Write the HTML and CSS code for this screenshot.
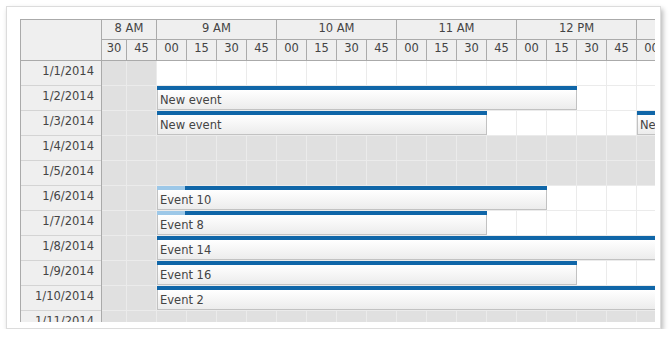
FILE: index.html
```html
<!DOCTYPE html>
<html>
<head>
<meta charset="utf-8">
<link rel="stylesheet" href="styles.css">
</head>
<body>
<div class="frame">
  <div class="scheduler">
    <div class="corner"></div>
    <div class="timeheader">
      <div class="hrow">
        <div class="hcell first">8 AM</div>
        <div class="hcell">9 AM</div>
        <div class="hcell">10 AM</div>
        <div class="hcell">11 AM</div>
        <div class="hcell">12 PM</div>
        <div class="hcell">1 PM</div>
      </div>
      <div class="mrow">
        <div class="mcell first">30</div><div class="mcell">45</div>
        <div class="mcell">00</div><div class="mcell">15</div><div class="mcell">30</div><div class="mcell">45</div>
        <div class="mcell">00</div><div class="mcell">15</div><div class="mcell">30</div><div class="mcell">45</div>
        <div class="mcell">00</div><div class="mcell">15</div><div class="mcell">30</div><div class="mcell">45</div>
        <div class="mcell">00</div><div class="mcell">15</div><div class="mcell">30</div><div class="mcell">45</div>
        <div class="mcell">00</div>
      </div>
    </div>
    <div class="rowheaders">
      <div class="rh">1/1/2014</div>
      <div class="rh">1/2/2014</div>
      <div class="rh">1/3/2014</div>
      <div class="rh">1/4/2014</div>
      <div class="rh">1/5/2014</div>
      <div class="rh">1/6/2014</div>
      <div class="rh">1/7/2014</div>
      <div class="rh">1/8/2014</div>
      <div class="rh">1/9/2014</div>
      <div class="rh">1/10/2014</div>
      <div class="rh">1/11/2014</div>
    </div>
    <div class="grid">
      <div class="row">
        <div class="cell first nb"></div><div class="cell nb"></div>
        <div class="cell"></div><div class="cell"></div><div class="cell"></div><div class="cell"></div><div class="cell"></div><div class="cell"></div><div class="cell"></div><div class="cell"></div><div class="cell"></div><div class="cell"></div><div class="cell"></div><div class="cell"></div><div class="cell"></div><div class="cell"></div><div class="cell"></div><div class="cell"></div><div class="cell"></div>
      </div>
      <div class="row">
        <div class="cell first nb"></div><div class="cell nb"></div>
        <div class="cell"></div><div class="cell"></div><div class="cell"></div><div class="cell"></div><div class="cell"></div><div class="cell"></div><div class="cell"></div><div class="cell"></div><div class="cell"></div><div class="cell"></div><div class="cell"></div><div class="cell"></div><div class="cell"></div><div class="cell"></div><div class="cell"></div><div class="cell"></div><div class="cell"></div>
        <div class="event" style="left:55px;width:420px"><div class="bar"><div class="bar-inner"></div></div><div class="ebody">New event</div></div>
      </div>
      <div class="row">
        <div class="cell first nb"></div><div class="cell nb"></div>
        <div class="cell"></div><div class="cell"></div><div class="cell"></div><div class="cell"></div><div class="cell"></div><div class="cell"></div><div class="cell"></div><div class="cell"></div><div class="cell"></div><div class="cell"></div><div class="cell"></div><div class="cell"></div><div class="cell"></div><div class="cell"></div><div class="cell"></div><div class="cell"></div><div class="cell"></div>
        <div class="event" style="left:55px;width:330px"><div class="bar"><div class="bar-inner"></div></div><div class="ebody">New event</div></div>
        <div class="event" style="left:535px;width:120px"><div class="bar"><div class="bar-inner"></div></div><div class="ebody">New event</div></div>
      </div>
      <div class="row">
        <div class="cell first nb"></div><div class="cell nb"></div>
        <div class="cell nb"></div><div class="cell nb"></div><div class="cell nb"></div><div class="cell nb"></div><div class="cell nb"></div><div class="cell nb"></div><div class="cell nb"></div><div class="cell nb"></div><div class="cell nb"></div><div class="cell nb"></div><div class="cell nb"></div><div class="cell nb"></div><div class="cell nb"></div><div class="cell nb"></div><div class="cell nb"></div><div class="cell nb"></div><div class="cell nb"></div>
      </div>
      <div class="row">
        <div class="cell first nb"></div><div class="cell nb"></div>
        <div class="cell nb"></div><div class="cell nb"></div><div class="cell nb"></div><div class="cell nb"></div><div class="cell nb"></div><div class="cell nb"></div><div class="cell nb"></div><div class="cell nb"></div><div class="cell nb"></div><div class="cell nb"></div><div class="cell nb"></div><div class="cell nb"></div><div class="cell nb"></div><div class="cell nb"></div><div class="cell nb"></div><div class="cell nb"></div><div class="cell nb"></div>
      </div>
      <div class="row">
        <div class="cell first nb"></div><div class="cell nb"></div>
        <div class="cell"></div><div class="cell"></div><div class="cell"></div><div class="cell"></div><div class="cell"></div><div class="cell"></div><div class="cell"></div><div class="cell"></div><div class="cell"></div><div class="cell"></div><div class="cell"></div><div class="cell"></div><div class="cell"></div><div class="cell"></div><div class="cell"></div><div class="cell"></div><div class="cell"></div>
        <div class="event" style="left:55px;width:390px"><div class="bar"><div class="bar-inner" style="margin-left:28px"></div></div><div class="ebody">Event 10</div></div>
      </div>
      <div class="row">
        <div class="cell first nb"></div><div class="cell nb"></div>
        <div class="cell"></div><div class="cell"></div><div class="cell"></div><div class="cell"></div><div class="cell"></div><div class="cell"></div><div class="cell"></div><div class="cell"></div><div class="cell"></div><div class="cell"></div><div class="cell"></div><div class="cell"></div><div class="cell"></div><div class="cell"></div><div class="cell"></div><div class="cell"></div><div class="cell"></div>
        <div class="event" style="left:55px;width:330px"><div class="bar"><div class="bar-inner" style="margin-left:28px"></div></div><div class="ebody">Event 8</div></div>
      </div>
      <div class="row">
        <div class="cell first nb"></div><div class="cell nb"></div>
        <div class="cell"></div><div class="cell"></div><div class="cell"></div><div class="cell"></div><div class="cell"></div><div class="cell"></div><div class="cell"></div><div class="cell"></div><div class="cell"></div><div class="cell"></div><div class="cell"></div><div class="cell"></div><div class="cell"></div><div class="cell"></div><div class="cell"></div><div class="cell"></div><div class="cell"></div>
        <div class="event" style="left:55px;width:600px"><div class="bar"><div class="bar-inner"></div></div><div class="ebody">Event 14</div></div>
      </div>
      <div class="row">
        <div class="cell first nb"></div><div class="cell nb"></div>
        <div class="cell"></div><div class="cell"></div><div class="cell"></div><div class="cell"></div><div class="cell"></div><div class="cell"></div><div class="cell"></div><div class="cell"></div><div class="cell"></div><div class="cell"></div><div class="cell"></div><div class="cell"></div><div class="cell"></div><div class="cell"></div><div class="cell"></div><div class="cell"></div><div class="cell"></div>
        <div class="event" style="left:55px;width:420px"><div class="bar"><div class="bar-inner"></div></div><div class="ebody">Event 16</div></div>
      </div>
      <div class="row">
        <div class="cell first nb"></div><div class="cell nb"></div>
        <div class="cell"></div><div class="cell"></div><div class="cell"></div><div class="cell"></div><div class="cell"></div><div class="cell"></div><div class="cell"></div><div class="cell"></div><div class="cell"></div><div class="cell"></div><div class="cell"></div><div class="cell"></div><div class="cell"></div><div class="cell"></div><div class="cell"></div><div class="cell"></div><div class="cell"></div>
        <div class="event" style="left:55px;width:600px"><div class="bar"><div class="bar-inner"></div></div><div class="ebody">Event 2</div></div>
      </div>
      <div class="row">
        <div class="cell first nb"></div><div class="cell nb"></div>
        <div class="cell nb"></div><div class="cell nb"></div><div class="cell nb"></div><div class="cell nb"></div><div class="cell nb"></div><div class="cell nb"></div><div class="cell nb"></div><div class="cell nb"></div><div class="cell nb"></div><div class="cell nb"></div><div class="cell nb"></div><div class="cell nb"></div><div class="cell nb"></div><div class="cell nb"></div><div class="cell nb"></div><div class="cell nb"></div><div class="cell nb"></div>
      </div>
    </div>
  </div>
</div>
</body>
</html>
```
FILE: styles.css
```css
html, body {
  margin: 0;
  background: #fff;
}
body {
  font-family: "DejaVu Sans", Verdana, sans-serif;
  font-size: 11.5px;
  color: #444;
}
.frame {
  margin: 6px 0 0 6px;
  width: 655px;
  height: 323px;
  box-sizing: border-box;
  border: 1px solid #dcdcdc;
  box-shadow: 2px 3px 5px rgba(0, 0, 0, 0.28);
  padding: 12px 5px 6px 13px;
  background: #fff;
}
.scheduler {
  width: 635px;
  height: 303px;
  box-sizing: border-box;
  overflow: hidden;
  border-left: 1px solid #aaa;
  border-top: 1px solid #aaa;
  display: grid;
  grid-template-columns: 81px 553px;
  grid-template-rows: 41px auto;
}
.corner {
  background: #efefef;
  border-right: 1px solid #aaa;
  border-bottom: 1px solid #aaa;
}
.timeheader {
  overflow: hidden;
  background: #efefef;
}
.hrow, .mrow {
  display: flex;
}
.hcell, .mcell {
  flex: none;
  box-sizing: border-box;
  border-right: 1px solid #aaa;
  border-bottom: 1px solid #aaa;
  text-align: center;
  line-height: 16px;
  white-space: nowrap;
}
.hcell {
  width: 120px;
  height: 20px;
}
.hcell.first {
  width: 55px;
}
.mcell {
  width: 30px;
  height: 21px;
}
.mcell.first {
  width: 25px;
}
.rowheaders {
  background: #efefef;
  border-right: 1px solid #aaa;
  overflow: hidden;
}
.rh {
  height: 25px;
  box-sizing: border-box;
  border-bottom: 1px solid #d4d4d4;
  text-align: right;
  padding: 2px 7px 0 0;
  line-height: 16px;
}
.grid {
  overflow: hidden;
}
.row {
  position: relative;
  display: flex;
  height: 25px;
}
.cell {
  flex: none;
  width: 30px;
  height: 25px;
  box-sizing: border-box;
  border-right: 1px solid #ebebeb;
  border-bottom: 1px solid #ebebeb;
  background: #fff;
}
.cell.first {
  width: 25px;
}
.cell.nb {
  background: #e0e0e0;
}
.event {
  position: absolute;
  top: 0;
  height: 24px;
}
.bar {
  height: 4px;
  background: #9dc8e8;
}
.bar-inner {
  height: 4px;
  background: #1066a8;
}
.ebody {
  height: 20px;
  box-sizing: border-box;
  border: 1px solid #c2c2c2;
  border-top: none;
  background: linear-gradient(#ffffff, #ececec);
  padding: 2px 0 0 2px;
  line-height: 16px;
  white-space: nowrap;
  overflow: hidden;
}
```
